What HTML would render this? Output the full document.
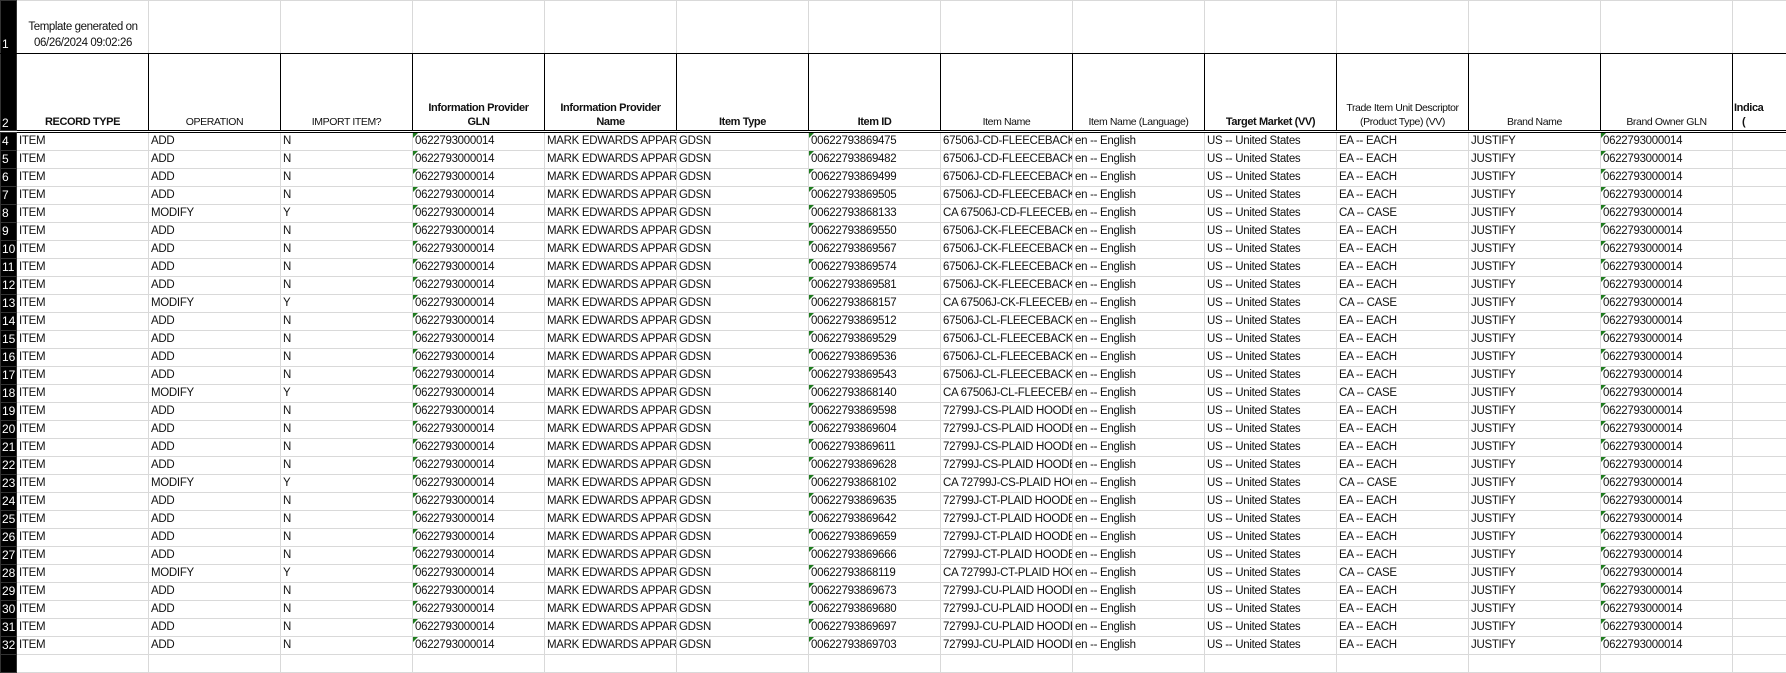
<!DOCTYPE html>
<html><head><meta charset="utf-8"><style>
body{margin:0;width:1786px;height:655px;overflow:hidden;background:#fff;font-family:"Liberation Sans",sans-serif;}
table{border-collapse:collapse;table-layout:fixed;position:absolute;left:0;top:0;width:1792px;}
td{border:1px solid #d9d9d9;padding:0 2px;white-space:nowrap;overflow:hidden;font-size:11.5px;letter-spacing:-0.3px;color:#111;height:17px;line-height:17px;position:relative}
td.rh{background:#000;color:#fff;border-color:#333;padding:0 1px;font-size:12px;letter-spacing:0}
tr.r1 td{height:50px;border-bottom:1px solid #000;vertical-align:bottom}
tr.r1 td.a{font-size:11.5px;line-height:16px;padding:0 0 2px 1px;text-align:center;letter-spacing:-0.4px;white-space:normal}
tr.r2 td{height:75px;border:1px solid #000;border-bottom:3px double #000;vertical-align:bottom;text-align:center;font-size:10.5px;line-height:14px;white-space:normal;padding:0 10px 1px;letter-spacing:-0.4px}
tr.r2 td.rh{text-align:left;border-color:#333;font-size:12px;padding:0 1px}
tr.r2 td b{font-size:11px}
.g::before{content:"";position:absolute;left:0;top:0;border-top:5px solid #1e7b1e;border-right:5px solid transparent}
</style></head><body>
<table>
<colgroup><col style="width:16px"><col style="width:132px"><col style="width:132px"><col style="width:132px"><col style="width:132px"><col style="width:132px"><col style="width:132px"><col style="width:132px"><col style="width:132px"><col style="width:132px"><col style="width:132px"><col style="width:132px"><col style="width:132px"><col style="width:132px"><col style="width:60px"></colgroup>
<tr class="r1"><td class="rh">1</td><td class="a">Template generated on 06/26/2024 09:02:26</td><td></td><td></td><td></td><td></td><td></td><td></td><td></td><td></td><td></td><td></td><td></td><td></td><td></td></tr>
<tr class="r2"><td class="rh">2</td><td><b>RECORD TYPE</b></td><td>OPERATION</td><td>IMPORT ITEM?</td><td><b>Information Provider GLN</b></td><td><b>Information Provider Name</b></td><td><b>Item Type</b></td><td><b>Item ID</b></td><td>Item Name</td><td>Item Name (Language)</td><td><b>Target Market (VV)</b></td><td style="padding:0 2px 1px">Trade Item Unit Descriptor (Product Type) (VV)</td><td>Brand Name</td><td>Brand Owner GLN</td><td style="text-align:left;padding:0 1px 1px"><b>Indica<br>&nbsp;&nbsp;&nbsp;(</b></td></tr>
<tr><td class="rh">4</td><td>ITEM</td><td>ADD</td><td>N</td><td class="g">0622793000014</td><td>MARK EDWARDS APPAREL</td><td>GDSN</td><td class="g">00622793869475</td><td>67506J-CD-FLEECEBACK YOUTH</td><td>en -- English</td><td>US -- United States</td><td>EA -- EACH</td><td>JUSTIFY</td><td class="g">0622793000014</td><td></td></tr>
<tr><td class="rh">5</td><td>ITEM</td><td>ADD</td><td>N</td><td class="g">0622793000014</td><td>MARK EDWARDS APPAREL</td><td>GDSN</td><td class="g">00622793869482</td><td>67506J-CD-FLEECEBACK YOUTH</td><td>en -- English</td><td>US -- United States</td><td>EA -- EACH</td><td>JUSTIFY</td><td class="g">0622793000014</td><td></td></tr>
<tr><td class="rh">6</td><td>ITEM</td><td>ADD</td><td>N</td><td class="g">0622793000014</td><td>MARK EDWARDS APPAREL</td><td>GDSN</td><td class="g">00622793869499</td><td>67506J-CD-FLEECEBACK YOUTH</td><td>en -- English</td><td>US -- United States</td><td>EA -- EACH</td><td>JUSTIFY</td><td class="g">0622793000014</td><td></td></tr>
<tr><td class="rh">7</td><td>ITEM</td><td>ADD</td><td>N</td><td class="g">0622793000014</td><td>MARK EDWARDS APPAREL</td><td>GDSN</td><td class="g">00622793869505</td><td>67506J-CD-FLEECEBACK YOUTH</td><td>en -- English</td><td>US -- United States</td><td>EA -- EACH</td><td>JUSTIFY</td><td class="g">0622793000014</td><td></td></tr>
<tr><td class="rh">8</td><td>ITEM</td><td>MODIFY</td><td>Y</td><td class="g">0622793000014</td><td>MARK EDWARDS APPAREL</td><td>GDSN</td><td class="g">00622793868133</td><td>CA 67506J-CD-FLEECEBACK</td><td>en -- English</td><td>US -- United States</td><td>CA -- CASE</td><td>JUSTIFY</td><td class="g">0622793000014</td><td></td></tr>
<tr><td class="rh">9</td><td>ITEM</td><td>ADD</td><td>N</td><td class="g">0622793000014</td><td>MARK EDWARDS APPAREL</td><td>GDSN</td><td class="g">00622793869550</td><td>67506J-CK-FLEECEBACK YOUTH</td><td>en -- English</td><td>US -- United States</td><td>EA -- EACH</td><td>JUSTIFY</td><td class="g">0622793000014</td><td></td></tr>
<tr><td class="rh">10</td><td>ITEM</td><td>ADD</td><td>N</td><td class="g">0622793000014</td><td>MARK EDWARDS APPAREL</td><td>GDSN</td><td class="g">00622793869567</td><td>67506J-CK-FLEECEBACK YOUTH</td><td>en -- English</td><td>US -- United States</td><td>EA -- EACH</td><td>JUSTIFY</td><td class="g">0622793000014</td><td></td></tr>
<tr><td class="rh">11</td><td>ITEM</td><td>ADD</td><td>N</td><td class="g">0622793000014</td><td>MARK EDWARDS APPAREL</td><td>GDSN</td><td class="g">00622793869574</td><td>67506J-CK-FLEECEBACK YOUTH</td><td>en -- English</td><td>US -- United States</td><td>EA -- EACH</td><td>JUSTIFY</td><td class="g">0622793000014</td><td></td></tr>
<tr><td class="rh">12</td><td>ITEM</td><td>ADD</td><td>N</td><td class="g">0622793000014</td><td>MARK EDWARDS APPAREL</td><td>GDSN</td><td class="g">00622793869581</td><td>67506J-CK-FLEECEBACK YOUTH</td><td>en -- English</td><td>US -- United States</td><td>EA -- EACH</td><td>JUSTIFY</td><td class="g">0622793000014</td><td></td></tr>
<tr><td class="rh">13</td><td>ITEM</td><td>MODIFY</td><td>Y</td><td class="g">0622793000014</td><td>MARK EDWARDS APPAREL</td><td>GDSN</td><td class="g">00622793868157</td><td>CA 67506J-CK-FLEECEBACK</td><td>en -- English</td><td>US -- United States</td><td>CA -- CASE</td><td>JUSTIFY</td><td class="g">0622793000014</td><td></td></tr>
<tr><td class="rh">14</td><td>ITEM</td><td>ADD</td><td>N</td><td class="g">0622793000014</td><td>MARK EDWARDS APPAREL</td><td>GDSN</td><td class="g">00622793869512</td><td>67506J-CL-FLEECEBACK YOUTH</td><td>en -- English</td><td>US -- United States</td><td>EA -- EACH</td><td>JUSTIFY</td><td class="g">0622793000014</td><td></td></tr>
<tr><td class="rh">15</td><td>ITEM</td><td>ADD</td><td>N</td><td class="g">0622793000014</td><td>MARK EDWARDS APPAREL</td><td>GDSN</td><td class="g">00622793869529</td><td>67506J-CL-FLEECEBACK YOUTH</td><td>en -- English</td><td>US -- United States</td><td>EA -- EACH</td><td>JUSTIFY</td><td class="g">0622793000014</td><td></td></tr>
<tr><td class="rh">16</td><td>ITEM</td><td>ADD</td><td>N</td><td class="g">0622793000014</td><td>MARK EDWARDS APPAREL</td><td>GDSN</td><td class="g">00622793869536</td><td>67506J-CL-FLEECEBACK YOUTH</td><td>en -- English</td><td>US -- United States</td><td>EA -- EACH</td><td>JUSTIFY</td><td class="g">0622793000014</td><td></td></tr>
<tr><td class="rh">17</td><td>ITEM</td><td>ADD</td><td>N</td><td class="g">0622793000014</td><td>MARK EDWARDS APPAREL</td><td>GDSN</td><td class="g">00622793869543</td><td>67506J-CL-FLEECEBACK YOUTH</td><td>en -- English</td><td>US -- United States</td><td>EA -- EACH</td><td>JUSTIFY</td><td class="g">0622793000014</td><td></td></tr>
<tr><td class="rh">18</td><td>ITEM</td><td>MODIFY</td><td>Y</td><td class="g">0622793000014</td><td>MARK EDWARDS APPAREL</td><td>GDSN</td><td class="g">00622793868140</td><td>CA 67506J-CL-FLEECEBACK</td><td>en -- English</td><td>US -- United States</td><td>CA -- CASE</td><td>JUSTIFY</td><td class="g">0622793000014</td><td></td></tr>
<tr><td class="rh">19</td><td>ITEM</td><td>ADD</td><td>N</td><td class="g">0622793000014</td><td>MARK EDWARDS APPAREL</td><td>GDSN</td><td class="g">00622793869598</td><td>72799J-CS-PLAID HOODED</td><td>en -- English</td><td>US -- United States</td><td>EA -- EACH</td><td>JUSTIFY</td><td class="g">0622793000014</td><td></td></tr>
<tr><td class="rh">20</td><td>ITEM</td><td>ADD</td><td>N</td><td class="g">0622793000014</td><td>MARK EDWARDS APPAREL</td><td>GDSN</td><td class="g">00622793869604</td><td>72799J-CS-PLAID HOODED</td><td>en -- English</td><td>US -- United States</td><td>EA -- EACH</td><td>JUSTIFY</td><td class="g">0622793000014</td><td></td></tr>
<tr><td class="rh">21</td><td>ITEM</td><td>ADD</td><td>N</td><td class="g">0622793000014</td><td>MARK EDWARDS APPAREL</td><td>GDSN</td><td class="g">00622793869611</td><td>72799J-CS-PLAID HOODED</td><td>en -- English</td><td>US -- United States</td><td>EA -- EACH</td><td>JUSTIFY</td><td class="g">0622793000014</td><td></td></tr>
<tr><td class="rh">22</td><td>ITEM</td><td>ADD</td><td>N</td><td class="g">0622793000014</td><td>MARK EDWARDS APPAREL</td><td>GDSN</td><td class="g">00622793869628</td><td>72799J-CS-PLAID HOODED</td><td>en -- English</td><td>US -- United States</td><td>EA -- EACH</td><td>JUSTIFY</td><td class="g">0622793000014</td><td></td></tr>
<tr><td class="rh">23</td><td>ITEM</td><td>MODIFY</td><td>Y</td><td class="g">0622793000014</td><td>MARK EDWARDS APPAREL</td><td>GDSN</td><td class="g">00622793868102</td><td>CA 72799J-CS-PLAID HOODED</td><td>en -- English</td><td>US -- United States</td><td>CA -- CASE</td><td>JUSTIFY</td><td class="g">0622793000014</td><td></td></tr>
<tr><td class="rh">24</td><td>ITEM</td><td>ADD</td><td>N</td><td class="g">0622793000014</td><td>MARK EDWARDS APPAREL</td><td>GDSN</td><td class="g">00622793869635</td><td>72799J-CT-PLAID HOODED</td><td>en -- English</td><td>US -- United States</td><td>EA -- EACH</td><td>JUSTIFY</td><td class="g">0622793000014</td><td></td></tr>
<tr><td class="rh">25</td><td>ITEM</td><td>ADD</td><td>N</td><td class="g">0622793000014</td><td>MARK EDWARDS APPAREL</td><td>GDSN</td><td class="g">00622793869642</td><td>72799J-CT-PLAID HOODED</td><td>en -- English</td><td>US -- United States</td><td>EA -- EACH</td><td>JUSTIFY</td><td class="g">0622793000014</td><td></td></tr>
<tr><td class="rh">26</td><td>ITEM</td><td>ADD</td><td>N</td><td class="g">0622793000014</td><td>MARK EDWARDS APPAREL</td><td>GDSN</td><td class="g">00622793869659</td><td>72799J-CT-PLAID HOODED</td><td>en -- English</td><td>US -- United States</td><td>EA -- EACH</td><td>JUSTIFY</td><td class="g">0622793000014</td><td></td></tr>
<tr><td class="rh">27</td><td>ITEM</td><td>ADD</td><td>N</td><td class="g">0622793000014</td><td>MARK EDWARDS APPAREL</td><td>GDSN</td><td class="g">00622793869666</td><td>72799J-CT-PLAID HOODED</td><td>en -- English</td><td>US -- United States</td><td>EA -- EACH</td><td>JUSTIFY</td><td class="g">0622793000014</td><td></td></tr>
<tr><td class="rh">28</td><td>ITEM</td><td>MODIFY</td><td>Y</td><td class="g">0622793000014</td><td>MARK EDWARDS APPAREL</td><td>GDSN</td><td class="g">00622793868119</td><td>CA 72799J-CT-PLAID HOODED</td><td>en -- English</td><td>US -- United States</td><td>CA -- CASE</td><td>JUSTIFY</td><td class="g">0622793000014</td><td></td></tr>
<tr><td class="rh">29</td><td>ITEM</td><td>ADD</td><td>N</td><td class="g">0622793000014</td><td>MARK EDWARDS APPAREL</td><td>GDSN</td><td class="g">00622793869673</td><td>72799J-CU-PLAID HOODED</td><td>en -- English</td><td>US -- United States</td><td>EA -- EACH</td><td>JUSTIFY</td><td class="g">0622793000014</td><td></td></tr>
<tr><td class="rh">30</td><td>ITEM</td><td>ADD</td><td>N</td><td class="g">0622793000014</td><td>MARK EDWARDS APPAREL</td><td>GDSN</td><td class="g">00622793869680</td><td>72799J-CU-PLAID HOODED</td><td>en -- English</td><td>US -- United States</td><td>EA -- EACH</td><td>JUSTIFY</td><td class="g">0622793000014</td><td></td></tr>
<tr><td class="rh">31</td><td>ITEM</td><td>ADD</td><td>N</td><td class="g">0622793000014</td><td>MARK EDWARDS APPAREL</td><td>GDSN</td><td class="g">00622793869697</td><td>72799J-CU-PLAID HOODED</td><td>en -- English</td><td>US -- United States</td><td>EA -- EACH</td><td>JUSTIFY</td><td class="g">0622793000014</td><td></td></tr>
<tr><td class="rh">32</td><td>ITEM</td><td>ADD</td><td>N</td><td class="g">0622793000014</td><td>MARK EDWARDS APPAREL</td><td>GDSN</td><td class="g">00622793869703</td><td>72799J-CU-PLAID HOODED</td><td>en -- English</td><td>US -- United States</td><td>EA -- EACH</td><td>JUSTIFY</td><td class="g">0622793000014</td><td></td></tr>
<tr><td class="rh"></td><td></td><td></td><td></td><td></td><td></td><td></td><td></td><td></td><td></td><td></td><td></td><td></td><td></td><td></td></tr>
</table>
</body></html>
